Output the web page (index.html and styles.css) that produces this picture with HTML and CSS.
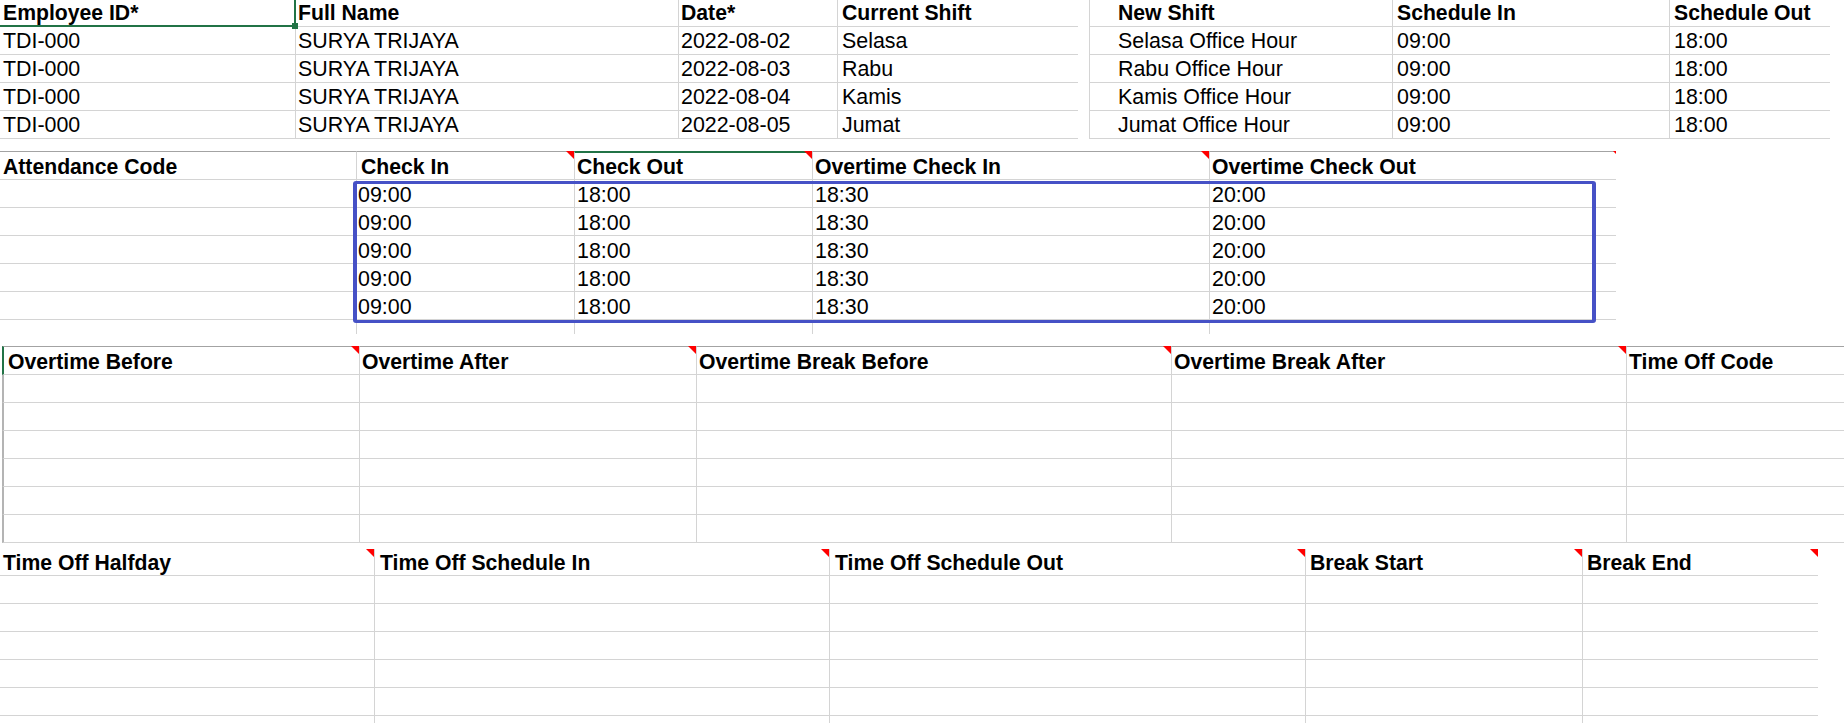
FILE: index.html
```html
<!DOCTYPE html>
<html>
<head>
<meta charset="utf-8">
<link rel="stylesheet" href="styles.css">
</head>
<body>
<div class="s1">
  <div class="grid g1a">
    <div class="c h nl">Employee ID*</div>
    <div class="c h">Full Name</div>
    <div class="c h">Date*</div>
    <div class="c h p4">Current Shift</div>

    <div class="c nl">TDI-000</div><div class="c">SURYA TRIJAYA</div><div class="c">2022-08-02</div><div class="c p4">Selasa</div>
    <div class="c nl">TDI-000</div><div class="c">SURYA TRIJAYA</div><div class="c">2022-08-03</div><div class="c p4">Rabu</div>
    <div class="c nl">TDI-000</div><div class="c">SURYA TRIJAYA</div><div class="c">2022-08-04</div><div class="c p4">Kamis</div>
    <div class="c nl">TDI-000</div><div class="c">SURYA TRIJAYA</div><div class="c">2022-08-05</div><div class="c p4">Jumat</div>
  </div>
  <div class="grid g1b">
    <div class="c h ind">New Shift</div>
    <div class="c h p4">Schedule In</div>
    <div class="c h p4">Schedule Out</div>

    <div class="c ind">Selasa Office Hour</div><div class="c p4">09:00</div><div class="c p4">18:00</div>
    <div class="c ind">Rabu Office Hour</div><div class="c p4">09:00</div><div class="c p4">18:00</div>
    <div class="c ind">Kamis Office Hour</div><div class="c p4">09:00</div><div class="c p4">18:00</div>
    <div class="c ind">Jumat Office Hour</div><div class="c p4">09:00</div><div class="c p4">18:00</div>
  </div>
  <div class="sel"></div>
  <div class="handle"></div>
</div>

<div class="s2">
  <div class="grid g2">
    <div class="c h top nl">Attendance Code</div>
    <div class="c h top t p4">Check In</div>
    <div class="c h top t gt">Check Out</div>
    <div class="c h top t">Overtime Check In</div>
    <div class="c h top ts">Overtime Check Out</div>

    <div class="c nl"></div><div class="c p1">09:00</div><div class="c">18:00</div><div class="c">18:30</div><div class="c">20:00</div>
    <div class="c nl"></div><div class="c p1">09:00</div><div class="c">18:00</div><div class="c">18:30</div><div class="c">20:00</div>
    <div class="c nl"></div><div class="c p1">09:00</div><div class="c">18:00</div><div class="c">18:30</div><div class="c">20:00</div>
    <div class="c nl"></div><div class="c p1">09:00</div><div class="c">18:00</div><div class="c">18:30</div><div class="c">20:00</div>
    <div class="c nl"></div><div class="c p1">09:00</div><div class="c">18:00</div><div class="c">18:30</div><div class="c">20:00</div>

    <div class="c nl stub"></div><div class="c stub"></div><div class="c stub"></div><div class="c stub"></div><div class="c stub"></div>
  </div>
  <div class="focus"></div>
</div>

<div class="s3">
  <div class="grid g3">
    <div class="c h top t first gl">Overtime Before</div>
    <div class="c h top t">Overtime After</div>
    <div class="c h top t">Overtime Break Before</div>
    <div class="c h top t">Overtime Break After</div>
    <div class="c h top">Time Off Code</div>

    <div class="c first"></div><div class="c"></div><div class="c"></div><div class="c"></div><div class="c"></div>
    <div class="c first"></div><div class="c"></div><div class="c"></div><div class="c"></div><div class="c"></div>
    <div class="c first"></div><div class="c"></div><div class="c"></div><div class="c"></div><div class="c"></div>
    <div class="c first"></div><div class="c"></div><div class="c"></div><div class="c"></div><div class="c"></div>
    <div class="c first"></div><div class="c"></div><div class="c"></div><div class="c"></div><div class="c"></div>
    <div class="c first"></div><div class="c"></div><div class="c"></div><div class="c"></div><div class="c"></div>
  </div>
</div>

<div class="s4">
  <div class="grid g4">
    <div class="c h t nl">Time Off Halfday</div>
    <div class="c h t p6">Time Off Schedule In</div>
    <div class="c h t p6">Time Off Schedule Out</div>
    <div class="c h t p4">Break Start</div>
    <div class="c h t p4">Break End</div>

    <div class="c nl"></div><div class="c"></div><div class="c"></div><div class="c"></div><div class="c"></div>
    <div class="c nl"></div><div class="c"></div><div class="c"></div><div class="c"></div><div class="c"></div>
    <div class="c nl"></div><div class="c"></div><div class="c"></div><div class="c"></div><div class="c"></div>
    <div class="c nl"></div><div class="c"></div><div class="c"></div><div class="c"></div><div class="c"></div>
    <div class="c nl"></div><div class="c"></div><div class="c"></div><div class="c"></div><div class="c"></div>

    <div class="c nl stub"></div><div class="c stub"></div><div class="c stub"></div><div class="c stub"></div><div class="c stub"></div>
  </div>
</div>
</body>
</html>
```

FILE: styles.css
```css
html, body {
  margin: 0;
  padding: 0;
  background: #ffffff;
}

body {
  font-family: "Liberation Sans", Arial, sans-serif;
  font-size: 21.4px;
  color: #000000;
  width: 1844px;
  height: 723px;
  overflow: hidden;
}

.grid {
  display: grid;
}

.c {
  box-sizing: border-box;
  border-bottom: 1px solid #d4d4d4;
  border-left: 1px solid #d4d4d4;
  padding: 0 0 0 2px;
  display: flex;
  align-items: flex-end;
  line-height: 24px;
  white-space: nowrap;
  overflow: visible;
  position: relative;
}

.c.nl {
  border-left: 0;
  padding-left: 3px;
}

.h {
  font-weight: bold;
  font-size: 21.2px;
}

.p1 { padding-left: 1px; }
.p4 { padding-left: 4px; }
.p6 { padding-left: 5px; }
.ind { padding-left: 28px; }

.top {
  border-top: 1px solid #a3a3a3;
}

.gt {
  border-top: 2px solid #217346;
}

.stub {
  border-bottom: 0;
}

/* comment indicators */
.t::after,
.ts::after {
  content: "";
  position: absolute;
  right: 0;
  width: 0;
  height: 0;
  border-left: 8px solid transparent;
  border-top: 8px solid #ff0000;
}

.t::after {
  top: 0;
}

.top.t::after {
  top: -1px;
}

.gt.t::after {
  top: -2px;
}

.ts::after {
  top: -1px;
  border-left-width: 3px;
  border-top-width: 3px;
}

/* section 1 */
.s1 {
  display: flex;
  column-gap: 11px;
  position: relative;
}

.s1 .c {
  padding-bottom: 1px;
}

.g1a {
  grid-template-columns: 295px 383px 159px 241px;
  grid-template-rows: 27px repeat(4, 28px);
}

.g1b {
  grid-template-columns: 303px 277px 161px;
  grid-template-rows: 27px repeat(4, 28px);
}

.sel {
  position: absolute;
  left: -2px;
  top: -2px;
  width: 298px;
  height: 29px;
  box-sizing: border-box;
  border: 2px solid #217346;
}

.handle {
  position: absolute;
  left: 292px;
  top: 23px;
  width: 6px;
  height: 6px;
  background: #217346;
}

/* section 2 */
.s2 {
  margin-top: 12px;
  position: relative;
}

.g2 {
  grid-template-columns: 356px 218px 238px 397px 407px;
  grid-template-rows: 29px repeat(5, 28px) 14px;
}

.focus {
  position: absolute;
  left: 353px;
  top: 30px;
  width: 1243px;
  height: 142px;
  box-sizing: border-box;
  border: 4px solid #4651c6;
  border-top-width: 3px;
  border-bottom-width: 3px;
  border-radius: 3px;
}

/* section 3 */
.s3 {
  margin-top: 12px;
}

.g3 {
  margin-left: 2px;
  grid-template-columns: 357px 337px 475px 455px 218px;
  grid-template-rows: 29px repeat(6, 28px);
}

.g3 .c.first {
  border-left: 2px solid #b4b4b4;
  padding-left: 4px;
}

.g3 .c.gl {
  border-left-color: #217346;
}

/* section 4 */
.s4 {
  margin-top: 6px;
}

.g4 {
  grid-template-columns: 374px 455px 476px 277px 236px;
  grid-template-rows: 27px repeat(5, 28px) 20px;
}
```
